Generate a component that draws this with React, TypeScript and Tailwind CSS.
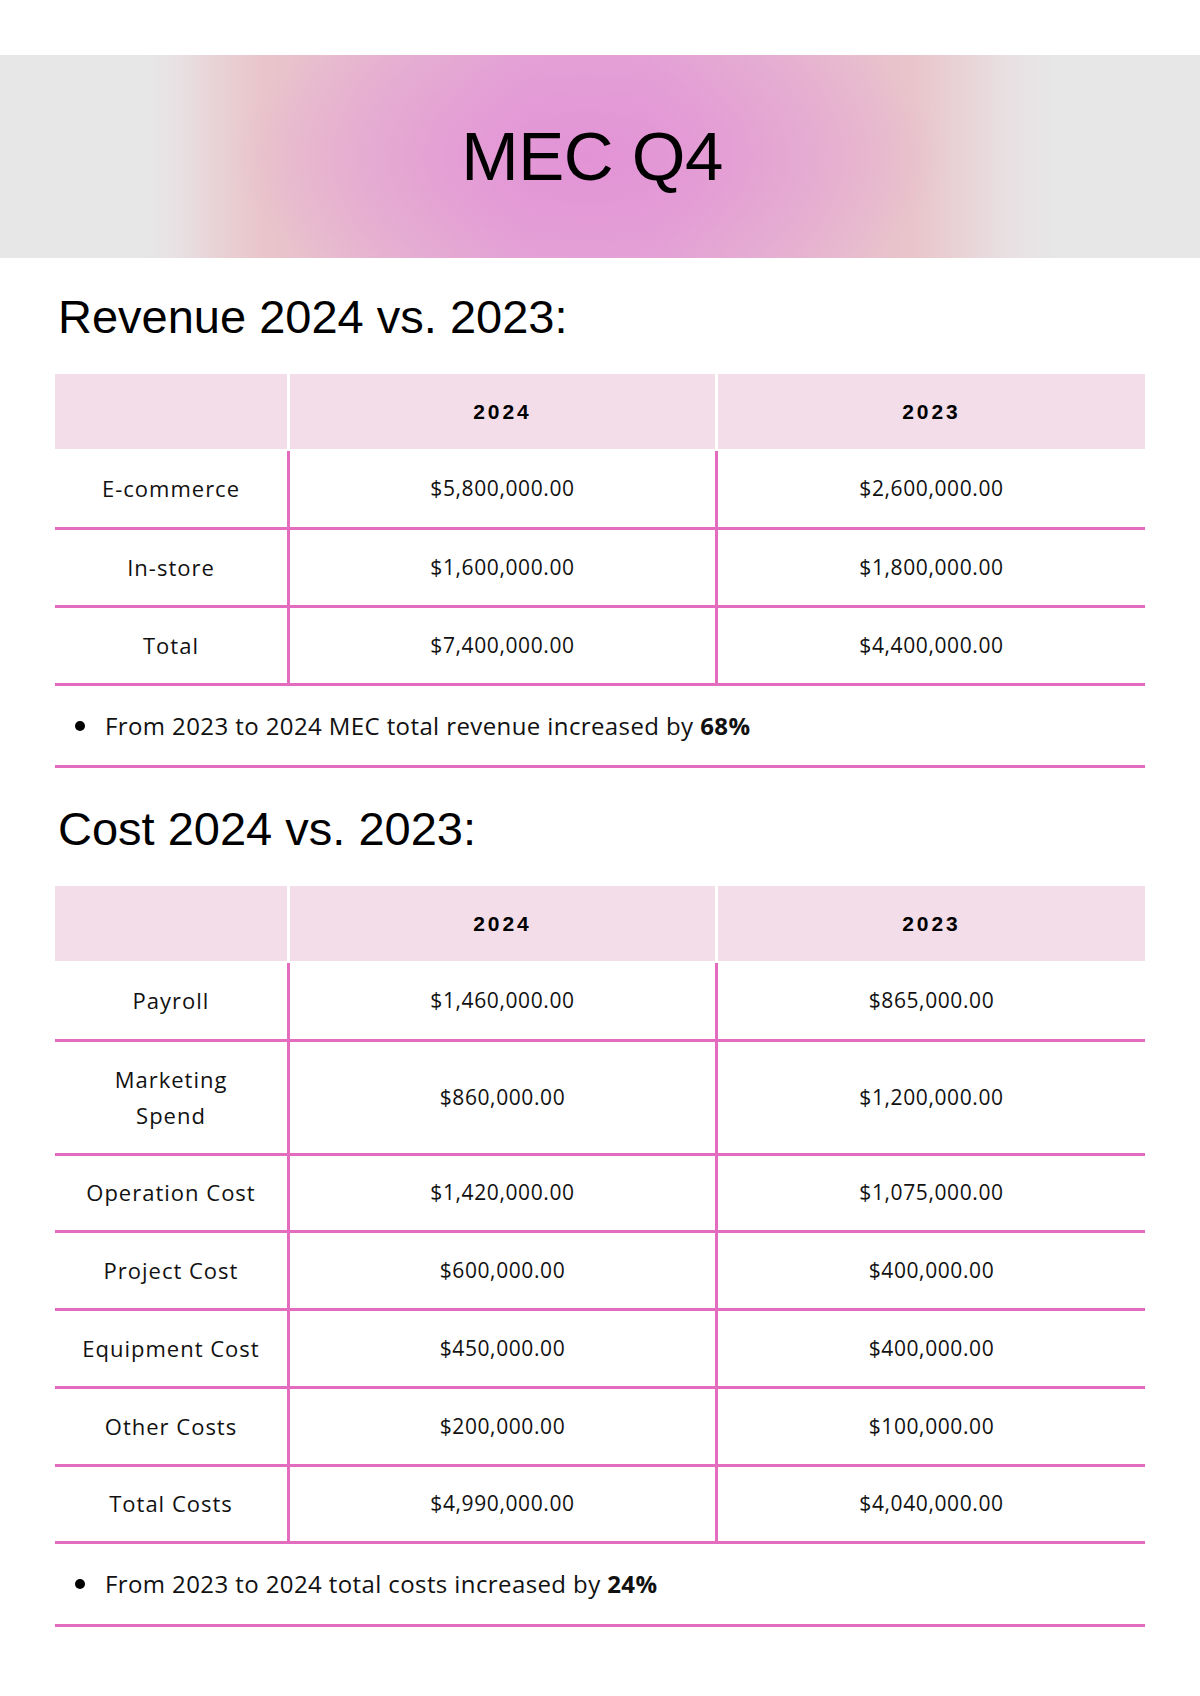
import React from "react";

type Row = { label: React.ReactNode; a: string; b: string; h: string };

const revenue: Row[] = [
  { label: "E-commerce", a: "$5,800,000.00", b: "$2,600,000.00", h: "h-[79px]" },
  { label: "In-store", a: "$1,600,000.00", b: "$1,800,000.00", h: "h-[78px]" },
  { label: "Total", a: "$7,400,000.00", b: "$4,400,000.00", h: "h-[78px]" },
];

const costs: Row[] = [
  { label: "Payroll", a: "$1,460,000.00", b: "$865,000.00", h: "h-[79px]" },
  {
    label: (
      <>
        Marketing
        <br />
        Spend
      </>
    ),
    a: "$860,000.00",
    b: "$1,200,000.00",
    h: "h-[114px]",
  },
  { label: "Operation Cost", a: "$1,420,000.00", b: "$1,075,000.00", h: "h-[77px]" },
  { label: "Project Cost", a: "$600,000.00", b: "$400,000.00", h: "h-[78px]" },
  { label: "Equipment Cost", a: "$450,000.00", b: "$400,000.00", h: "h-[78px]" },
  { label: "Other Costs", a: "$200,000.00", b: "$100,000.00", h: "h-[78px]" },
  { label: "Total Costs", a: "$4,990,000.00", b: "$4,040,000.00", h: "h-[77px]" },
];

function Heading({ children, className }: { children: React.ReactNode; className: string }) {
  return (
    <h2
      className={
        "h-[56px] text-[47px] leading-[56px] text-black font-['Liberation_Sans',Arial,sans-serif] pl-[3px] " +
        className
      }
    >
      {children}
    </h2>
  );
}

function Table({ rows }: { rows: Row[] }) {
  return (
    <div className="mt-[29px]">
      <div className="grid h-[75px] grid-cols-[232px_428px_430px]">
        <div className="bg-[#f2dde8]" />
        <div className="flex items-center justify-center border-l-[3px] border-white bg-[#f2dde8] text-[21px] font-bold tracking-[0.14em] text-black font-['Liberation_Sans',Arial,sans-serif]">
          2024
        </div>
        <div className="flex items-center justify-center border-l-[3px] border-white bg-[#f2dde8] text-[21px] font-bold tracking-[0.14em] text-black font-['Liberation_Sans',Arial,sans-serif]">
          2023
        </div>
      </div>
      <div className="mt-[2px]">
        {rows.map((r, i) => (
          <div
            key={i}
            className={"grid grid-cols-[232px_428px_430px] border-b-[3px] border-[#e46cbf] " + r.h}
          >
            <div className="flex items-center justify-center pb-[2px] text-center text-[22px] leading-[36px] tracking-[1px] text-[#111] font-['Open_Sans',sans-serif]">
              <span>{r.label}</span>
            </div>
            <div className="flex items-center justify-center border-l-[3px] border-[#e46cbf] text-[21px] tracking-[0.6px] text-[#111] font-['Open_Sans',sans-serif]">
              {r.a}
            </div>
            <div className="flex items-center justify-center border-l-[3px] border-[#e46cbf] text-[21px] tracking-[0.6px] text-[#111] font-['Open_Sans',sans-serif]">
              {r.b}
            </div>
          </div>
        ))}
      </div>
    </div>
  );
}

function Bullet({ children, h }: { children: React.ReactNode; h: string }) {
  return (
    <div className={"flex items-center border-b-[3px] border-[#e46cbf] pl-[20px] " + h}>
      <span className="mr-[20px] h-[10px] w-[10px] rounded-full bg-black" />
      <span className="text-[24px] tracking-[0.4px] text-[#111] font-['Open_Sans',sans-serif]">{children}</span>
    </div>
  );
}

export default function App() {
  return (
    <div className="min-h-[1696px] w-[1200px] bg-white pt-[55px]">
      <div className="flex h-[203px] items-center justify-center bg-[#e7e7e7] bg-[radial-gradient(ellipse_360px_160px_at_49%_50%,rgba(226,140,214,0.75),rgba(226,140,214,0)),linear-gradient(to_right,#e7e7e7_12%,#e8e0e2_15%,#e8d2d6_18%,#e9c5cb_22%,#e7b9cf_30%,#e4a8d6_44%,#e4a8d6_54%,#e7b9cf_68%,#e9c5cb_76%,#e8d2d6_80%,#e8e0e2_84%,#e7e7e7_88%)]">
        <h1 className="pr-[16px] text-[69px] leading-none tracking-[-0.5px] text-black font-['Liberation_Sans',Arial,sans-serif]">
          MEC Q4
        </h1>
      </div>
      <div className="px-[55px]">
        <Heading className="mt-[31px]">Revenue 2024 vs. 2023:</Heading>
        <Table rows={revenue} />
        <Bullet h="h-[82px]">
          From 2023 to 2024 MEC total revenue increased by <b className="font-bold">68%</b>
        </Bullet>
        <Heading className="mt-[33px]">Cost 2024 vs. 2023:</Heading>
        <Table rows={costs} />
        <Bullet h="h-[83px]">
          From 2023 to 2024 total costs increased by <b className="font-bold">24%</b>
        </Bullet>
      </div>
    </div>
  );
}
